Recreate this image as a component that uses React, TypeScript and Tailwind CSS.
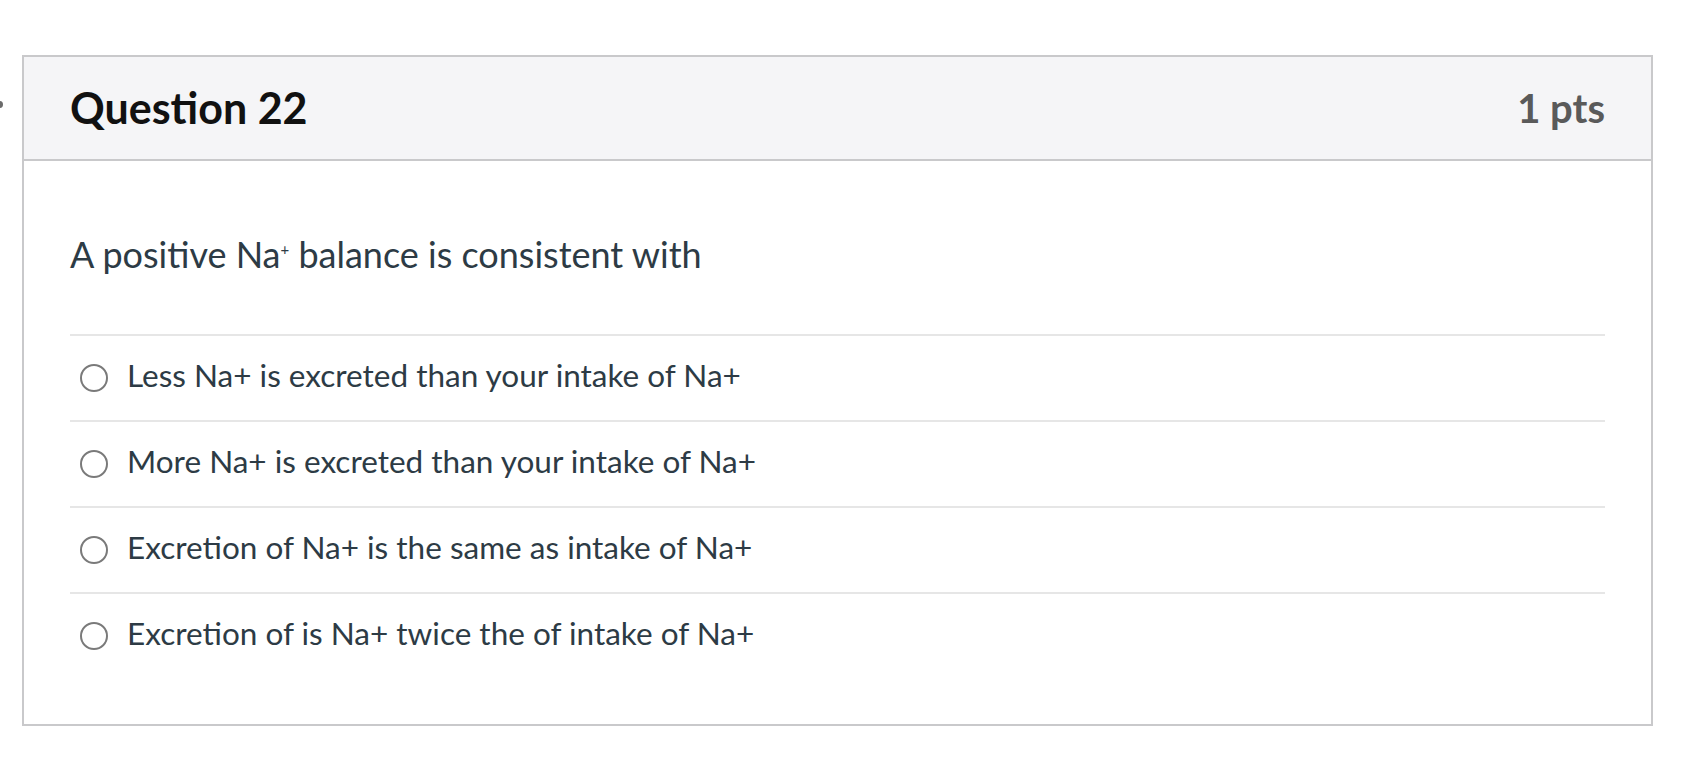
import React from "react";

const answers = [
  "Less Na+ is excreted than your intake of Na+",
  "More Na+ is excreted than your intake of Na+",
  "Excretion of Na+ is the same as intake of Na+",
  "Excretion of is Na+ twice the of intake of Na+",
];

const App = () => {
  return (
    <div className="min-h-screen w-full bg-white font-['Lato','Noto_Sans',sans-serif] text-[#2d3b45]">
      <div className="relative pt-[55px] pl-[22px]">
        {/* cut-off marker at the left edge */}
        <div className="absolute left-[-4px] top-[101px] h-[7px] w-[7px] rounded-full bg-[#6b6b6b]" />
        <div className="w-[1631px] border-2 border-[#c9c9cb]">
          <div className="flex h-[104px] items-center justify-between border-b-2 border-[#c9c9cb] bg-[#f5f5f7] px-[46px]">
            <h2 className="text-[43px] font-bold text-[#111]">Question 22</h2>
            <span className="text-[40px] font-bold text-[#5a5a5a]">1 pts</span>
          </div>
          <div className="px-[46px] pb-[46px]">
            <p className="pt-[73px] pb-[60px] text-[36px] leading-[40px]">
              A positive Na<sup className="top-[-0.85em] text-[15px]">+</sup> balance is consistent with
            </p>
            {answers.map((a, i) => (
              <div
                key={i}
                className="flex h-[86px] items-center gap-[19px] border-t-2 border-[#e6e6e6] pl-[10px]"
              >
                <span className="h-[28px] w-[28px] shrink-0 rounded-full border-2 border-[#7a7a7a] bg-white" />
                <span className="pb-[4px] text-[31.5px]">{a}</span>
              </div>
            ))}
          </div>
        </div>
      </div>
    </div>
  );
};

export default App;
